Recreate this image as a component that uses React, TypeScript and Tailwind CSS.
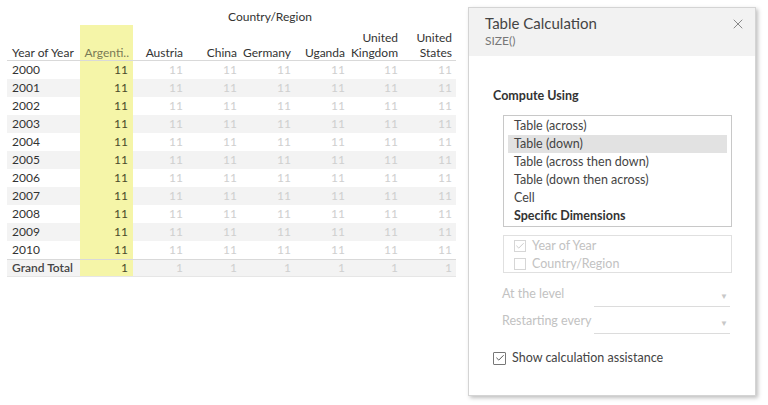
import { Check, X } from "lucide-react";

const years = ["2000", "2001", "2002", "2003", "2004", "2005", "2006", "2007", "2008", "2009", "2010"];
const others = ["Austria", "China", "Germany", "Uganda", "United Kingdom", "United States"];
const headers: [string, string][] = [
  ["", "Austria"],
  ["", "China"],
  ["", "Germany"],
  ["", "Uganda"],
  ["United", "Kingdom"],
  ["United", "States"],
];

function Row({ label, value, band, total }: { label: string; value: string; band: boolean; total?: boolean }) {
  return (
    <div className={`flex h-[18px] items-center ${band ? "bg-[#f3f3f3]" : "bg-white"} ${total ? "border-t border-[#d9d9d9] border-b border-b-[#e6e6e6] bg-[#f3f3f3]" : ""}`}>
      <div className={`w-[73px] pl-[5px] ${total ? "text-[#444] font-semibold" : "text-[#333]"}`}>{label}</div>
      <div className="w-[53px] h-full flex items-center justify-end pr-[5px] bg-[#f5f5a8] text-[#4a4a2a]">{value}</div>
      {others.map((o, i) => (
        <div key={o} className={`${i === 4 ? "w-[53px]" : "w-[54px]"} text-right pr-[4px] text-[#cfcfcf]`}>
          {value}
        </div>
      ))}
    </div>
  );
}

function Dropdown({ label }: { label: string }) {
  return (
    <div className="flex items-end h-[22px] text-[12.5px] text-[#c2c2c2]">
      <span className="w-[92px] pb-[3px]">{label}</span>
      <div className="flex-1 border-b border-[#dcdcdc] h-full flex items-center justify-end pr-[2px] mr-[1px]">
        <span className="text-[8px] text-[#c8c8c8]">▼</span>
      </div>
    </div>
  );
}

export default function App() {
  return (
    <div className="w-[768px] h-[405px] bg-white flex font-['Lato',sans-serif] text-[12px] relative overflow-hidden">
      {/* crosstab */}
      <div className="ml-[7px] mt-[9px] w-[449px] shrink-0">
        <div className="h-[16px] pl-[221px] text-[#333] leading-[16px]">Country/Region</div>
        <div className="flex h-[36px] border-b border-[#d9d9d9]">
          <div className="w-[73px] pl-[5px] flex items-end text-[#333] leading-[15px]">Year of Year</div>
          <div className="w-[53px] bg-[#f5f5a8] flex items-end justify-end pr-[4px] text-[#7a7a55] leading-[15px]">Argenti..</div>
          {headers.map(([a, b], i) => (
            <div key={b} className={`${i === 4 ? "w-[53px]" : "w-[54px]"} flex flex-col items-end justify-end pr-[4px] text-[#333] leading-[15px]`}>
              {a && <span>{a}</span>}
              <span>{b}</span>
            </div>
          ))}
        </div>
        {years.map((y, i) => (
          <Row key={y} label={y} value="11" band={i % 2 === 1} />
        ))}
        <Row label="Grand Total" value="1" band total />
      </div>

      {/* table calculation dialog */}
      <div className="absolute left-[468px] top-[7px] w-[288px] h-[389px] bg-white border border-[#d4d4d4] shadow-[2px_2px_4px_rgba(0,0,0,0.25)] flex flex-col">
        <div className="bg-[#f2f2f2] h-[48px] px-[16px] pt-[6px] relative">
          <div className="text-[15px] text-[#444] leading-[19px]">Table Calculation</div>
          <div className="text-[12px] text-[#777] leading-[16px]">SIZE()</div>
          <X className="absolute right-[9px] top-[8px] w-[16px] h-[16px] text-[#777]" strokeWidth={1.3} />
        </div>
        <div className="pl-[24px] pr-[24px] pt-[33px]">
          <div className="text-[12.5px] font-bold text-[#333] h-[14px] leading-[14px]">Compute Using</div>
          <div className="ml-[10px] mt-[12px] w-[229px] border border-[#c8c8c8] py-[1px] px-[4px] text-[12.5px] text-[#444]">
            {[
              "Table (across)",
              "Table (down)",
              "Table (across then down)",
              "Table (down then across)",
              "Cell",
            ].map((t, i) => (
              <div key={t} className={`h-[18px] leading-[18px] pl-[6px] ${i === 1 ? "bg-[#e2e2e2]" : ""}`}>{t}</div>
            ))}
            <div className="h-[18px] leading-[18px] pl-[6px] font-bold text-[#333]">Specific Dimensions</div>
          </div>
          <div className="ml-[10px] mt-[8px] w-[229px] h-[38px] border border-[#e0e0e0] pl-[10px] pt-[1px] text-[12.5px] text-[#c2c2c2]">
            <div className="flex items-center h-[18px] gap-[6px]">
              <span className="w-[12px] h-[12px] border border-[#d6d6d6] flex items-center justify-center">
                <Check className="w-[10px] h-[10px] text-[#c2c2c2]" strokeWidth={2} />
              </span>
              Year of Year
            </div>
            <div className="flex items-center h-[18px] gap-[6px]">
              <span className="w-[12px] h-[12px] border border-[#d6d6d6]" />
              Country/Region
            </div>
          </div>
          <div className="ml-[9px] mt-[12px]">
            <Dropdown label="At the level" />
          </div>
          <div className="ml-[9px] mt-[5px]">
            <Dropdown label="Restarting every" />
          </div>
          <div className="mt-[15px] flex items-center gap-[6px] text-[12.5px] text-[#444]">
            <span className="w-[13px] h-[13px] border border-[#777] rounded-[1px] flex items-center justify-center">
              <Check className="w-[10px] h-[10px] text-[#444]" strokeWidth={2.2} />
            </span>
            Show calculation assistance
          </div>
        </div>
      </div>
    </div>
  );
}
